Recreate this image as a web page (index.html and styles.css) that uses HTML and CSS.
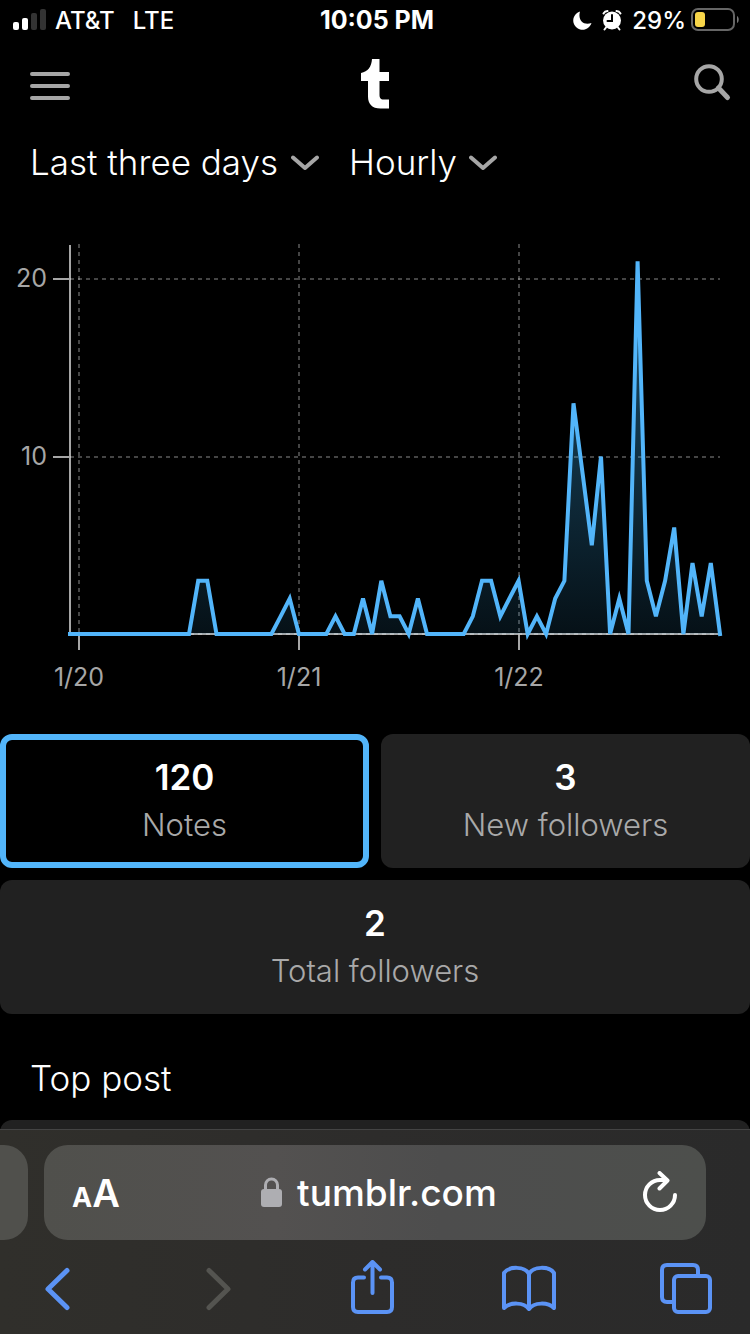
FILE: index.html
```html
<!DOCTYPE html>
<html lang="en">

<head>
	<meta charset="utf-8" />
	<title>Activity</title>
	<meta name="viewport" content="width=device-width, initial-scale=1" />
	<link rel="stylesheet" href="styles.css">
</head>

<body>
	<div class="status">
		<div class="status-left">
			<svg width="34" height="22" viewBox="0 0 34 22" aria-hidden="true">
				<rect x="0" y="13" width="6" height="8" rx="2" fill="#fff" />
				<rect x="9" y="9" width="6" height="12" rx="2" fill="#fff" />
				<rect x="18" y="4" width="6" height="17" rx="2" fill="#333" />
				<rect x="27" y="0" width="6" height="21" rx="2" fill="#333" />
			</svg>
			<span class="carrier">AT&amp;T</span>
			<span>LTE</span>
		</div>
		<div class="clock">10:05 PM</div>
		<div class="status-right">
			<svg class="status-icon" width="20" height="20" viewBox="0 0 20 20" aria-hidden="true">
				<path d="M8 1.500A9.300 9.300 0 1 0 19.500 13C11.500 16 5.500 10 8 1.500Z" fill="#fff" />
			</svg>
			<svg class="status-icon" width="20" height="22" viewBox="0 0 20 22" aria-hidden="true">
				<circle cx="10" cy="11.500" r="9" fill="#fff" />
				<path d="M1.500 4.500A5 5 0 0 1 5.500 2M14.500 2A5 5 0 0 1 18.500 4.500M4 18.500L2.500 20.500M16 18.500L17.500 20.500" fill="none" stroke="#fff" stroke-width="2" stroke-linecap="round" />
				<path d="M10 6V12H5.500" fill="none" stroke="#000" stroke-width="2" stroke-linecap="round" />
			</svg>
			<span>29%</span>
			<svg width="50" height="24" viewBox="0 0 50 24" aria-hidden="true">
				<rect x="1" y="1" width="42" height="21" rx="6" fill="none" stroke="#666" stroke-width="2" />
				<rect x="4" y="4" width="10" height="15" rx="3" fill="#f7d549" />
				<path d="M46 8C48.300 9 48.300 14 46 15Z" fill="#777" />
			</svg>
		</div>
	</div>

	<header class="header">
		<button class="icon-btn" aria-label="Menu">
			<svg width="40" height="34" viewBox="0 0 40 34">
				<path d="M2 7H38M2 19H38M2 31H38" fill="none" stroke="#a6a6a6" stroke-width="4" stroke-linecap="round" />
			</svg>
		</button>
		<a class="logo" href="#" aria-label="Tumblr">
			<svg width="28" height="50" viewBox="0 0 28 50">
				<path d="M11 0H18.500V13H28V22H18.500V35.500C18.500 39 19.500 40.500 22.500 40.500H28V49.500H19.500C11 49.500 7 45 7 37.500V22H0V14C7 12.500 10.500 8 11 0Z" fill="#fff" />
			</svg>
		</a>
		<button class="icon-btn" aria-label="Search">
			<svg width="38" height="42" viewBox="0 0 38 42">
				<circle cx="15" cy="16" r="12.800" fill="none" stroke="#a6a6a6" stroke-width="4" />
				<path d="M24.500 25L33.500 34.500" stroke="#a6a6a6" stroke-width="5" stroke-linecap="round" />
			</svg>
		</button>
	</header>

	<main>
		<div class="filters">
			<label class="filter">
				<select aria-label="Time period">
					<option>Last three days</option>
					<option>Last week</option>
					<option>Last month</option>
				</select>
				<svg width="28" height="16" viewBox="0 0 28 16" aria-hidden="true">
					<path d="M2 3.500L14 14L26 3.500" />
				</svg>
			</label>
			<label class="filter">
				<select aria-label="Interval">
					<option>Hourly</option>
					<option>Daily</option>
				</select>
				<svg width="28" height="16" viewBox="0 0 28 16" aria-hidden="true">
					<path d="M2 3.500L14 14L26 3.500" />
				</svg>
			</label>
		</div>

		<svg class="chart" viewBox="0 0 750 480" role="img" aria-label="Notes per hour">
			<defs>
				<linearGradient id="fill" gradientUnits="userSpaceOnUse" x1="0" y1="42" x2="0" y2="414">
					<stop offset="0" stop-color="#3aa8e6" stop-opacity="0.500" />
					<stop offset="1" stop-color="#3aa8e6" stop-opacity="0.100" />
				</linearGradient>
			</defs>
			<g id="axis" class="axis">
				<path d="M70 25V414H720" />
			</g>
			<g id="grid" class="grid"></g>
			<path id="area" fill="url(#fill)" />
			<path id="line" class="line" />
			<g id="labels" class="labels"></g>
		</svg>

		<div class="stats">
			<button class="stat is-active"><strong>120</strong><span>Notes</span></button>
			<button class="stat"><strong>3</strong><span>New followers</span></button>
			<button class="stat wide"><strong>2</strong><span>Total followers</span></button>
		</div>

		<h2>Top post</h2>
		<article class="post"></article>
	</main>

	<footer class="browser">
		<div class="tabs">
			<div class="tab-prev"></div>
			<div class="address">
				<button class="text-size" aria-label="Text size"><small>A</small>A</button>
				<div class="url">
					<svg width="22" height="32" viewBox="0 0 22 32" aria-hidden="true">
						<rect x="0" y="12" width="21" height="18" rx="3" fill="#aeaeb2" />
						<path d="M4.500 13V8A6 6 0 0 1 16.500 8V13" fill="none" stroke="#aeaeb2" stroke-width="3" />
					</svg>
					<span>tumblr.com</span>
				</div>
				<button class="icon-btn" aria-label="Reload">
					<svg width="36" height="44" viewBox="0 0 36 44">
						<path d="M33 24A15 15 0 1 1 18 9H25M17.500 2L25.500 9.500L17.500 17.500" fill="none" stroke="#fff" stroke-width="4" stroke-linecap="round" stroke-linejoin="round" />
					</svg>
				</button>
			</div>
			<div class="tab-next"></div>
		</div>
		<nav class="toolbar">
			<button class="icon-btn" aria-label="Back">
				<svg width="56" height="56" viewBox="0 0 56 56"><path d="M38 10.500L19 29L38 47.500" stroke-width="5" /></svg>
			</button>
			<button class="icon-btn" aria-label="Forward" disabled>
				<svg width="56" height="56" viewBox="0 0 56 56"><path d="M23 10.500L42 29L23 47.500" stroke-width="5" /></svg>
			</button>
			<button class="icon-btn" aria-label="Share">
				<svg width="56" height="56" viewBox="0 0 56 56"><path d="M20 17.500H14Q9 17.500 9 22.500V47Q9 52 14 52H43Q48 52 48 47V22.500Q48 17.500 43 17.500H37M28.500 33V2M21 9.500L28.500 2L36 9.500" /></svg>
			</button>
			<button class="icon-btn" aria-label="Bookmarks">
				<svg width="56" height="56" viewBox="0 0 56 56"><path d="M28 14C24 6 8 6 3 13V48C9 42 23 42 28 49C33 42 47 42 53 48V13C48 6 32 6 28 14V48" /></svg>
			</button>
			<button class="icon-btn" aria-label="Tabs">
				<svg width="56" height="56" viewBox="0 0 56 56"><path d="M14 42H9Q4 42 4 37V10Q4 5 9 5H35Q40 5 40 10V15" /><rect x="16" y="16" width="36" height="36" rx="4" /></svg>
			</button>
		</nav>
	</footer>

	<script>
		// notes per hour
		var notes = [
			0, 0, 0, 0, 0, 0, 0, 0, 0, 0, 0, 0, 0, 0, 3, 3, 0, 0, 0, 0, 0, 0, 0, 1,
			2, 0, 0, 0, 0, 1, 0, 0, 2, 0, 3, 1, 1, 0, 2, 0, 0, 0, 0, 0, 1, 3, 3, 1,
			2, 3, 0, 1, 0, 2, 3, 13, 9, 5, 10, 0, 2, 0, 21, 3, 1, 3, 6, 0, 4, 1, 4, 0
		];
		var left = 70;
		var right = 720;
		var top20 = 59;
		var bottom = 414;

		function x(i) {
			return left + i * (right - left) / (notes.length - 1);
		}

		function y(n) {
			return bottom - n * (bottom - top20) / 20;
		}

		function add(parent, name, attrs, text) {
			var el = document.createElementNS("http://www.w3.org/2000/svg", name);
			for (var key in attrs) el.setAttribute(key, attrs[key]);
			if (text) el.textContent = text;
			document.getElementById(parent).appendChild(el);
		}

		var points = notes.map(function (n, i) {
			return x(i).toFixed(1) + " " + y(n).toFixed(1);
		});
		var d = "M" + points.join("L");
		document.getElementById("line").setAttribute("d", d);
		document.getElementById("area").setAttribute("d", d + "Z");

		[0, 10, 20].forEach(function (n) {
			var py = Math.round(y(n));
			add("grid", "path", { d: "M" + left + " " + py + "H" + right });
			if (!n) return;
			add("axis", "path", { d: "M53 " + py + "H" + left });
			add("labels", "text", { x: 47, y: py + 8, "text-anchor": "end" }, n);
		});

		// first hour of each day
		[[1, "1/20"], [25, "1/21"], [49, "1/22"]].forEach(function (day) {
			var px = Math.round(x(day[0]));
			add("grid", "path", { d: "M" + px + " 24V" + bottom });
			add("axis", "path", { d: "M" + px + " " + bottom + "V430" });
			add("labels", "text", { x: px, y: 466, "text-anchor": "middle" }, day[1]);
		});
	</script>
</body>

</html>
```

FILE: styles.css
```css
* {
	box-sizing: border-box;
}

body {
	display: flex;
	flex-direction: column;
	height: 100vh;
	margin: 0;
	background: #000;
	color: #fff;
	font-family: Inter, "Liberation Sans", sans-serif;
}

svg {
	display: block;
	flex: none;
}

button,
select {
	margin: 0;
	padding: 0;
	border: 0;
	background: none;
	color: inherit;
	font: inherit;
}

/* status bar */
.status {
	display: grid;
	grid-template-columns: 1fr auto 1fr;
	align-items: center;
	height: 40px;
	padding: 0 9px 0 13px;
	font-size: 24px;
	font-weight: 500;
}

.status-left,
.status-right {
	display: flex;
	align-items: center;
	gap: 8px;
}

.status-right {
	justify-content: flex-end;
	gap: 5px;
}

.status-icon {
	margin-right: 5px;
}

.carrier {
	margin-right: 10px;
}

.clock {
	font-size: 25px;
	font-weight: 700;
}

/* header */
.header {
	display: grid;
	grid-template-columns: 1fr auto 1fr;
	align-items: center;
	height: 88px;
	padding: 0 18px 0 30px;
}

.header .icon-btn {
	justify-self: start;
}

.header .icon-btn:last-child {
	justify-self: end;
}

.logo {
	margin-right: 12px;
}

/* filters */
main {
	flex: 1;
	min-height: 0;
	overflow: hidden;
}

.filters {
	display: flex;
	gap: 30px;
	padding: 12px 30px 36px;
}

.filter {
	display: flex;
	align-items: center;
	gap: 12px;
}

.filter select {
	appearance: none;
	height: 44px;
	font-size: 35px;
	font-weight: 350;
	line-height: 44px;
}

.filter path {
	fill: none;
	stroke: #a6a6a6;
	stroke-width: 4;
	stroke-linecap: round;
	stroke-linejoin: round;
}

/* chart */
.chart {
	width: 100%;
	height: auto;
}

.grid path {
	stroke: #fff;
	stroke-opacity: 0.27;
	stroke-width: 2;
	stroke-dasharray: 4 4;
}

.axis path {
	fill: none;
	stroke: #a6a6a6;
	stroke-width: 2;
}

.line {
	fill: none;
	stroke: #52b5fa;
	stroke-width: 4;
	stroke-linecap: square;
}

.labels text {
	fill: #a6a6a6;
	font-size: 25px;
}

/* stats */
.stats {
	display: grid;
	grid-template-columns: 1fr 1fr;
	gap: 12px;
	margin-top: 34px;
}

.stat {
	display: flex;
	flex-direction: column;
	align-items: center;
	justify-content: center;
	height: 134px;
	border-radius: 12px;
	background: #212121;
}

.stat.wide {
	grid-column: span 2;
}

.stat.is-active {
	border: 6px solid #52b5fa;
	background: #000;
}

.stat strong {
	font-size: 35px;
	font-weight: 600;
	line-height: 48px;
}

.stat span {
	color: #a9a9a9;
	font-size: 31px;
	font-weight: 350;
	line-height: 48px;
}

h2 {
	margin: 0;
	padding: 42px 30px 20px;
	font-size: 35px;
	font-weight: 350;
	line-height: 44px;
}

.post {
	height: 300px;
	border-radius: 12px;
	background: #212121;
}

/* browser bar */
.browser {
	padding-top: 15px;
	border-top: 1px solid #444;
	background: linear-gradient(90deg, #302f2b, #2d2c2b 50%, #2a2a2a);
}

.tabs {
	display: flex;
	gap: 16px;
}

.tab-prev,
.address {
	height: 95px;
	background: #50504c;
}

.tab-prev {
	width: 28px;
	border-radius: 0 24px 24px 0;
}

.tab-next {
	width: 28px;
}

.address {
	display: flex;
	flex: 1;
	align-items: center;
	justify-content: space-between;
	padding: 0 28px;
	border-radius: 24px;
	background: linear-gradient(90deg, #50504c, #535150 35%, #4d4d4d 60%, #4d4f4c);
}

.text-size {
	font-size: 38px;
	font-weight: 600;
}

.text-size small {
	font-size: 27px;
	font-weight: 700;
}

.url {
	display: flex;
	align-items: center;
	gap: 14px;
	margin-right: 4px;
	font-size: 37px;
	font-weight: 550;
}

.toolbar {
	display: flex;
	justify-content: space-between;
	padding: 20px 36px 18px 29px;
}

.toolbar svg {
	fill: none;
	stroke: #5b93f5;
	stroke-width: 4;
	stroke-linecap: round;
	stroke-linejoin: round;
}

.toolbar button:disabled svg {
	stroke: #545450;
}
```
